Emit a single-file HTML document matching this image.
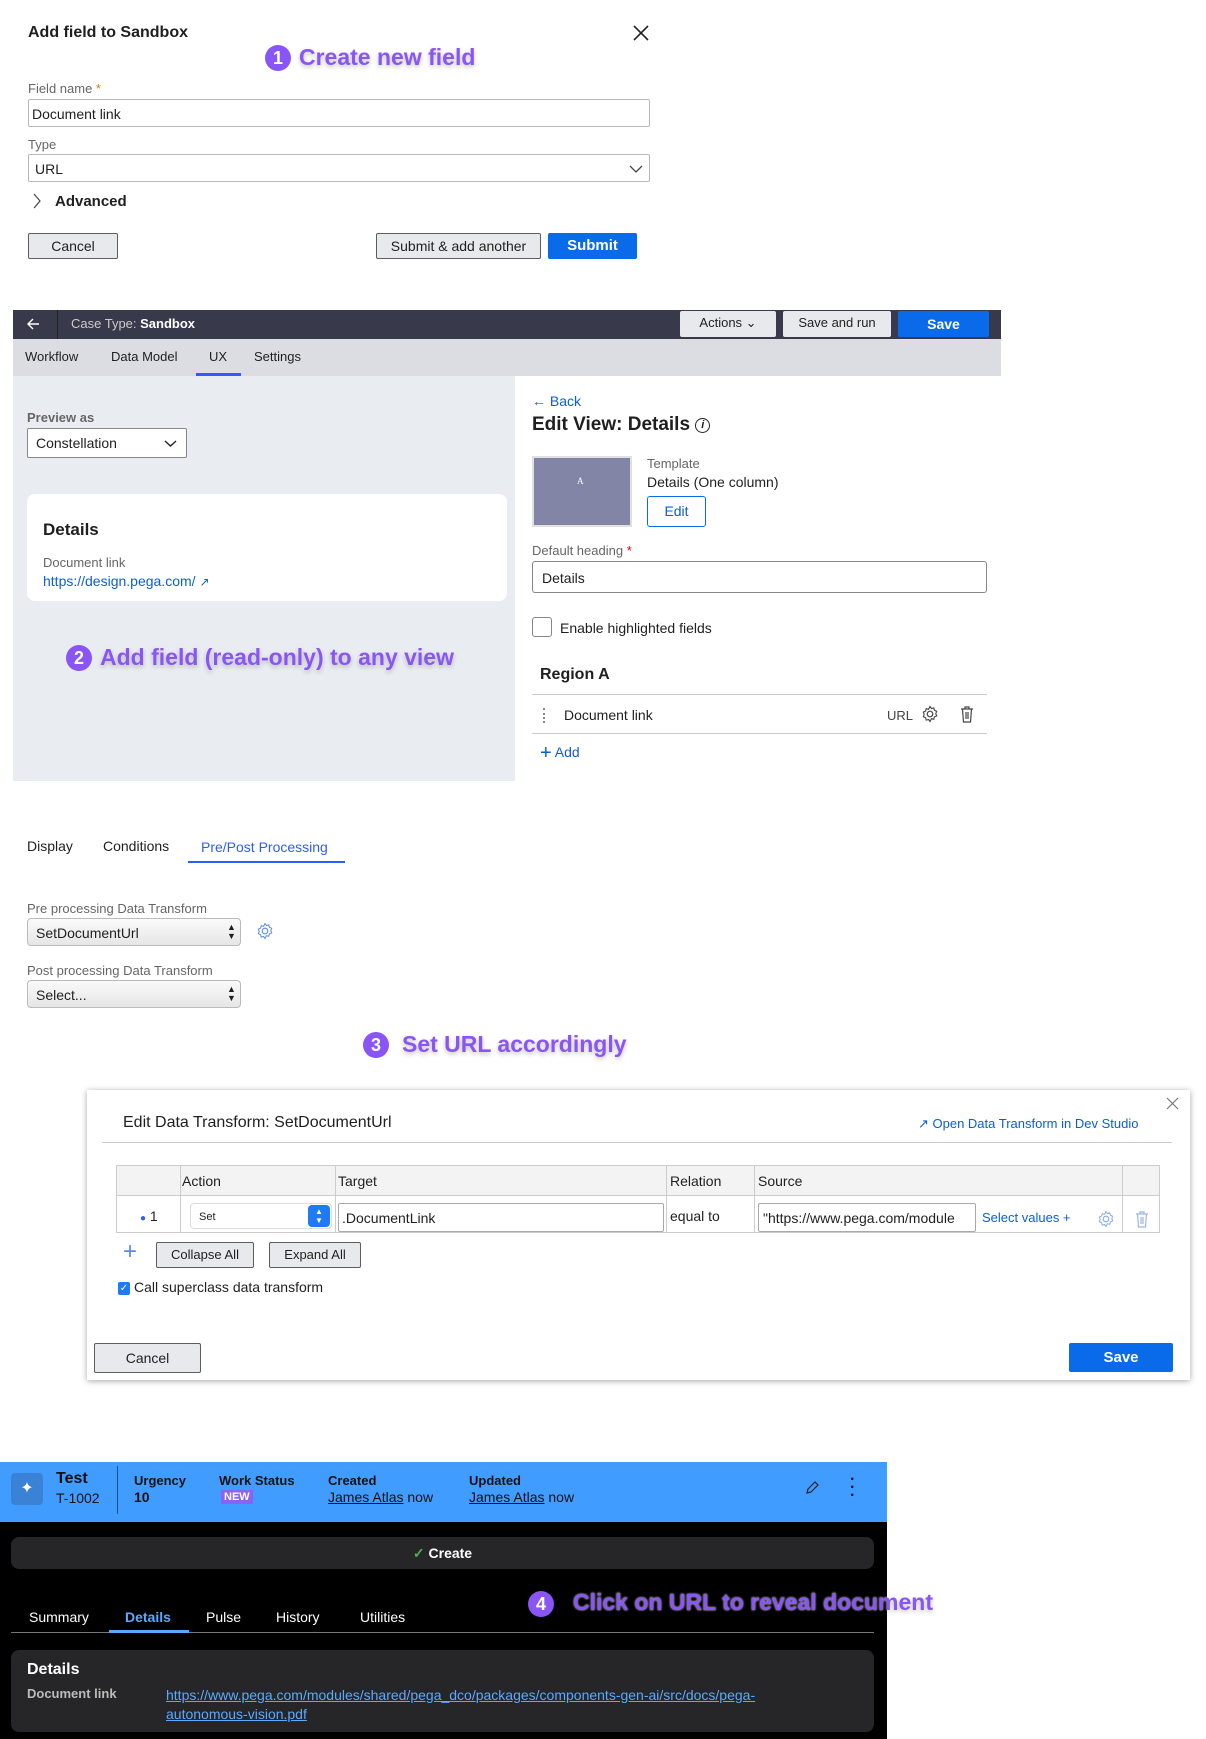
<!DOCTYPE html>
<html><head><meta charset="utf-8"><style>
*{box-sizing:border-box;margin:0;padding:0}
body{width:1206px;height:1739px;position:relative;background:#fff;font-family:"Liberation Sans",sans-serif;color:#1f1f1f;overflow:hidden;font-size:14px}
.a{position:absolute;white-space:nowrap}
.inp{position:absolute;border:1px solid #b9b9b9;border-radius:2px;background:#fff}
.btn{position:absolute;border:1px solid #5d5d5d;border-radius:2px;background:#e8e9ec;text-align:center;font-size:14px}
.blue{background:#0a6bea;color:#fff;font-weight:bold;border:none}
.circ{position:absolute;width:26px;height:26px;border-radius:50%;background:#8a55f5;color:#fff;font-weight:bold;font-size:18px;text-align:center;line-height:26px}
.ann{position:absolute;color:#8a55f5;font-weight:bold;font-size:23px;white-space:nowrap;text-shadow:0 2px 5px rgba(0,0,0,.25),0 0 2px #fff}
.lbl{color:#666;font-size:13px}
.lnk{color:#0a5fd6}
</style></head><body>

<!-- section 1 -->
<div class="a" style="left:28px;top:24px;font-size:16px;font-weight:600">Add field to Sandbox</div>
<svg class="a" style="left:632px;top:24px" width="18" height="18"><path d="M2 2L16 16M16 2L2 16" stroke="#222" stroke-width="1.6"/></svg>
<div class="circ" style="left:265px;top:45px">1</div>
<div class="ann" style="left:299px;top:44px">Create new field</div>
<div class="a lbl" style="left:28px;top:81px">Field name <span style="color:#e07b00">*</span></div>
<div class="inp" style="left:28px;top:99px;width:622px;height:28px"><span class="a" style="left:3px;top:6px">Document link</span></div>
<div class="a lbl" style="left:28px;top:137px">Type</div>
<div class="inp" style="left:28px;top:154px;width:622px;height:28px"><span class="a" style="left:6px;top:6px">URL</span>
<svg class="a" style="left:600px;top:9px" width="14" height="10"><path d="M1 2L7 8L13 2" fill="none" stroke="#444" stroke-width="1.3"/></svg></div>
<svg class="a" style="left:32px;top:193px" width="10" height="16"><path d="M2 1L8 8L2 15" fill="none" stroke="#444" stroke-width="1.2"/></svg>
<div class="a" style="left:55px;top:193px;font-size:15px;font-weight:600">Advanced</div>
<div class="btn" style="left:28px;top:233px;width:90px;height:26px;line-height:24px">Cancel</div>
<div class="btn" style="left:376px;top:233px;width:165px;height:26px;line-height:24px">Submit &amp; add another</div>
<div class="btn blue" style="left:548px;top:233px;width:89px;height:26px;line-height:26px;font-size:15px">Submit</div>

<!-- section 2 -->
<div class="a" style="left:13px;top:310px;width:988px;height:29px;background:#383a4c"></div>
<svg class="a" style="left:25px;top:316px" width="16" height="16"><path d="M14 8H3M8 3L3 8L8 13" fill="none" stroke="#fff" stroke-width="1.4"/></svg>
<div class="a" style="left:57px;top:310px;width:1px;height:29px;background:#222"></div>
<div class="a" style="left:71px;top:316px;color:#ccc;font-size:13px">Case Type: <b style="color:#fff">Sandbox</b></div>
<div class="btn" style="left:680px;top:311px;width:96px;height:26px;line-height:24px;border:none;background:#e8e9ec;font-size:13px">Actions &#8964;</div>
<div class="btn" style="left:783px;top:311px;width:108px;height:26px;line-height:24px;border:none;background:#e8e9ec;font-size:13px">Save and run</div>
<div class="btn blue" style="left:898px;top:311px;width:91px;height:26px;line-height:26px;font-size:14px">Save</div>
<div class="a" style="left:13px;top:339px;width:988px;height:37px;background:#dcdde2"></div>
<div class="a" style="left:25px;top:349px;font-size:13px">Workflow</div>
<div class="a" style="left:111px;top:349px;font-size:13px">Data Model</div>
<div class="a" style="left:209px;top:349px;font-size:13px">UX</div>
<div class="a" style="left:254px;top:349px;font-size:13px">Settings</div>
<div class="a" style="left:196px;top:373px;width:45px;height:3px;background:#2e5bff"></div>
<div class="a" style="left:13px;top:376px;width:502px;height:405px;background:#e9edf1"></div>
<div class="a lbl" style="left:27px;top:410px;font-weight:600">Preview as</div>
<div class="inp" style="left:27px;top:428px;width:160px;height:30px;border-color:#888"><span class="a" style="left:8px;top:6px">Constellation</span>
<svg class="a" style="left:136px;top:10px" width="13" height="9"><path d="M1 2L6.5 7L12 2" fill="none" stroke="#222" stroke-width="1.4"/></svg></div>
<div class="a" style="left:27px;top:494px;width:480px;height:107px;background:#fff;border-radius:8px"></div>
<div class="a" style="left:43px;top:520px;font-size:17px;font-weight:600">Details</div>
<div class="a lbl" style="left:43px;top:555px">Document link</div>
<div class="a lnk" style="left:43px;top:573px;font-size:14px">https://design.pega.com/ <span style="font-size:12px">&#8599;</span></div>
<div class="circ" style="left:66px;top:645px">2</div>
<div class="ann" style="left:100px;top:644px">Add field (read-only) to any view</div>

<div class="a lnk" style="left:532px;top:393px;font-size:14px">&#8592; Back</div>
<div class="a" style="left:532px;top:414px;font-size:19px;font-weight:600">Edit View: Details <span style="display:inline-block;width:15px;height:15px;border:1.4px solid #222;border-radius:50%;font-size:11px;text-align:center;line-height:13px;font-style:italic;vertical-align:2px">i</span></div>
<div class="a" style="left:532px;top:456px;width:100px;height:71px;border:2px solid #e0e0e0;background:#8285a6"></div>
<div class="a" style="left:577px;top:476px;color:#fff;font-size:9px;font-family:'Liberation Serif',serif">A</div>
<div class="a lbl" style="left:647px;top:456px">Template</div>
<div class="a" style="left:647px;top:474px">Details (One column)</div>
<div class="a" style="left:647px;top:496px;width:59px;height:31px;border:1px solid #0a6bea;border-radius:3px;color:#0a5fd6;text-align:center;line-height:29px">Edit</div>
<div class="a lbl" style="left:532px;top:543px">Default heading <span style="color:#d00">*</span></div>
<div class="inp" style="left:532px;top:561px;width:455px;height:32px;border-color:#888;border-radius:3px"><span class="a" style="left:9px;top:8px">Details</span></div>
<div class="a" style="left:532px;top:617px;width:20px;height:20px;border:1px solid #888;border-radius:3px"></div>
<div class="a" style="left:560px;top:620px">Enable highlighted fields</div>
<div class="a" style="left:540px;top:666px;font-size:16px;font-weight:600">Region A</div>
<div class="a" style="left:532px;top:694px;width:455px;height:1px;background:#ccc"></div>
<div class="a" style="left:543px;top:708px;width:2px;height:15px;border-left:2px dotted #888"></div>
<div class="a" style="left:564px;top:707px">Document link</div>
<div class="a" style="left:887px;top:708px;font-size:13px;color:#444">URL</div>
<svg class="a" style="left:921px;top:705px" width="18" height="18" viewBox="0 0 18 18"><circle cx="9" cy="9" r="2.8" fill="none" stroke="#444" stroke-width="1.2"/><path d="M9 1.5l1.4 2 2.4-.6.6 2.4 2.3 1-.9 2.3.9 2.3-2.3 1-.6 2.4-2.4-.6L9 16.5l-1.4-2-2.4.6-.6-2.4-2.3-1 .9-2.3L2.3 7.1l2.3-1 .6-2.4 2.4.6z" fill="none" stroke="#444" stroke-width="1.1"/></svg>
<svg class="a" style="left:960px;top:705px" width="14" height="18"><path d="M1 4H13M5 4V2H9V4M2.5 4L3.5 17H10.5L11.5 4M6 7V14M8 7V14" fill="none" stroke="#444" stroke-width="1.2"/></svg>
<div class="a" style="left:532px;top:733px;width:455px;height:1px;background:#ccc"></div>
<div class="a lnk" style="left:540px;top:742px;font-size:14px"><span style="font-size:20px;vertical-align:-2px">+</span> Add</div>

<!-- section 3 -->
<div class="a" style="left:27px;top:838px">Display</div>
<div class="a" style="left:103px;top:838px">Conditions</div>
<div class="a" style="left:201px;top:839px;color:#2e5bff">Pre/Post Processing</div>
<div class="a" style="left:188px;top:861px;width:157px;height:2px;background:#2e5bff"></div>
<div class="a lbl" style="left:27px;top:901px">Pre processing Data Transform</div>
<div class="a" style="left:27px;top:918px;width:214px;height:28px;border:1px solid #bbb;border-radius:4px;background:linear-gradient(#fafafa,#e6e6e6)"><span class="a" style="left:8px;top:6px">SetDocumentUrl</span><span class="a" style="left:199px;top:4px;font-size:9px;line-height:9px">▲<br>▼</span></div>
<svg class="a" style="left:256px;top:922px" width="18" height="18" viewBox="0 0 18 18"><circle cx="9" cy="9" r="2.8" fill="none" stroke="#5b8bea" stroke-width="1.1"/><path d="M9 1.5l1.4 2 2.4-.6.6 2.4 2.3 1-.9 2.3.9 2.3-2.3 1-.6 2.4-2.4-.6L9 16.5l-1.4-2-2.4.6-.6-2.4-2.3-1 .9-2.3L2.3 7.1l2.3-1 .6-2.4 2.4.6z" fill="none" stroke="#5b8bea" stroke-width="1"/></svg>
<div class="a lbl" style="left:27px;top:963px">Post processing Data Transform</div>
<div class="a" style="left:27px;top:980px;width:214px;height:28px;border:1px solid #bbb;border-radius:4px;background:linear-gradient(#fafafa,#e6e6e6)"><span class="a" style="left:8px;top:6px">Select...</span><span class="a" style="left:199px;top:4px;font-size:9px;line-height:9px">▲<br>▼</span></div>
<div class="circ" style="left:363px;top:1032px">3</div>
<div class="ann" style="left:402px;top:1031px">Set URL accordingly</div>

<div class="a" style="left:87px;top:1090px;width:1103px;height:290px;background:#fff;box-shadow:0 1px 6px rgba(0,0,0,.35)"></div>
<svg class="a" style="left:1166px;top:1097px" width="13" height="13"><path d="M1 1L12 12M12 1L1 12" stroke="#777" stroke-width="1.2"/></svg>
<div class="a" style="left:123px;top:1114px;font-size:16px">Edit Data Transform: SetDocumentUrl</div>
<div class="a lnk" style="left:918px;top:1116px;font-size:13px">&#8599; Open Data Transform in Dev Studio</div>
<div class="a" style="left:102px;top:1142px;width:1070px;height:1px;background:#ccc"></div>
<div class="a" style="left:116px;top:1165px;width:1044px;height:68px;border:1px solid #ccc;background:#fff"></div>
<div class="a" style="left:117px;top:1166px;width:1042px;height:30px;background:#f3f3f3;border-bottom:1px solid #ccc"></div>
<div class="a" style="left:180px;top:1166px;width:1px;height:66px;background:#ccc"></div>
<div class="a" style="left:335px;top:1166px;width:1px;height:66px;background:#ccc"></div>
<div class="a" style="left:666px;top:1166px;width:1px;height:66px;background:#ccc"></div>
<div class="a" style="left:754px;top:1166px;width:1px;height:66px;background:#ccc"></div>
<div class="a" style="left:1122px;top:1166px;width:1px;height:66px;background:#ccc"></div>
<div class="a" style="left:182px;top:1173px">Action</div>
<div class="a" style="left:338px;top:1173px">Target</div>
<div class="a" style="left:670px;top:1173px">Relation</div>
<div class="a" style="left:758px;top:1173px">Source</div>
<div class="a" style="left:140px;top:1208px"><span style="color:#2e5bff;font-size:10px">●</span> 1</div>
<div class="a" style="left:190px;top:1203px;width:142px;height:26px;border:1px solid #ddd;border-radius:4px;font-size:11px;padding:7px 8px">Set</div>
<div class="a" style="left:308px;top:1205px;width:22px;height:22px;background:#1e7bf5;border-radius:4px;color:#fff;font-size:8px;text-align:center;line-height:9px;padding-top:2px">▲<br>▼</div>
<div class="inp" style="left:338px;top:1203px;width:326px;height:29px;border-color:#aaa"><span class="a" style="left:3px;top:6px">.DocumentLink</span></div>
<div class="a" style="left:670px;top:1208px">equal to</div>
<div class="inp" style="left:758px;top:1203px;width:218px;height:29px;border-color:#aaa;overflow:hidden"><span class="a" style="left:4px;top:6px">"https://www.pega.com/module</span></div>
<div class="a lnk" style="left:982px;top:1210px;font-size:13px">Select values +</div>
<svg class="a" style="left:1097px;top:1210px" width="18" height="18" viewBox="0 0 18 18"><circle cx="9" cy="9" r="2.8" fill="none" stroke="#8aa8e8" stroke-width="1.1"/><path d="M9 1.5l1.4 2 2.4-.6.6 2.4 2.3 1-.9 2.3.9 2.3-2.3 1-.6 2.4-2.4-.6L9 16.5l-1.4-2-2.4.6-.6-2.4-2.3-1 .9-2.3L2.3 7.1l2.3-1 .6-2.4 2.4.6z" fill="none" stroke="#8aa8e8" stroke-width="1"/></svg>
<svg class="a" style="left:1135px;top:1210px" width="14" height="18"><path d="M1 4H13M5 4V2H9V4M2.5 4L3.5 17H10.5L11.5 4M6 7V14M8 7V14" fill="none" stroke="#9bb4ea" stroke-width="1.2"/></svg>
<div class="a" style="left:123px;top:1238px;color:#5b8bea;font-size:24px;font-weight:300">+</div>
<div class="btn" style="left:156px;top:1242px;width:98px;height:26px;line-height:24px;font-size:13px">Collapse All</div>
<div class="btn" style="left:269px;top:1242px;width:92px;height:26px;line-height:24px;font-size:13px">Expand All</div>
<div class="a" style="left:118px;top:1282px;width:12px;height:13px;background:#1e7bf5;border-radius:2px;color:#fff;font-size:10px;text-align:center;line-height:13px">✓</div>
<div class="a" style="left:134px;top:1279px">Call superclass data transform</div>
<div class="btn" style="left:94px;top:1343px;width:107px;height:30px;line-height:28px;background:#e8e9ec">Cancel</div>
<div class="btn blue" style="left:1069px;top:1343px;width:104px;height:29px;line-height:29px;font-size:15px">Save</div>

<!-- section 4 -->
<div class="a" style="left:0;top:1462px;width:887px;height:60px;background:#409cff"></div>
<div class="a" style="left:11px;top:1473px;width:32px;height:32px;background:#3a82d6;border-radius:4px;color:#fff;text-align:center;line-height:32px;font-size:16px">✦</div>
<div class="a" style="left:56px;top:1470px;font-size:16px;font-weight:bold;color:#111">Test</div>
<div class="a" style="left:56px;top:1490px;font-size:14px;color:#111">T-1002</div>
<div class="a" style="left:117px;top:1466px;width:1px;height:48px;background:#1c4e88"></div>
<div class="a" style="left:134px;top:1473px;font-size:13px;font-weight:600;color:#111">Urgency</div>
<div class="a" style="left:134px;top:1489px;font-size:14px;font-weight:bold;color:#111">10</div>
<div class="a" style="left:219px;top:1473px;font-size:13px;font-weight:600;color:#111">Work Status</div>
<div class="a" style="left:221px;top:1490px;font-size:11px;font-weight:bold;color:#fff;background:#8a63f0;padding:1px 3px">NEW</div>
<div class="a" style="left:328px;top:1473px;font-size:13px;font-weight:600;color:#111">Created</div>
<div class="a" style="left:328px;top:1489px;font-size:14px;color:#111"><u>James Atlas</u> now</div>
<div class="a" style="left:469px;top:1473px;font-size:13px;font-weight:600;color:#111">Updated</div>
<div class="a" style="left:469px;top:1489px;font-size:14px;color:#111"><u>James Atlas</u> now</div>
<svg class="a" style="left:804px;top:1480px" width="16" height="16"><path d="M3 13L4 9L11 2L14 5L7 12Z" fill="none" stroke="#222" stroke-width="1.2"/></svg>
<div class="a" style="left:850px;top:1476px;font-size:16px;font-weight:bold;line-height:8px;color:#111">·<br>·<br>·</div>
<div class="a" style="left:0;top:1522px;width:887px;height:217px;background:#000"></div>
<div class="a" style="left:11px;top:1537px;width:863px;height:32px;background:#262628;border-radius:8px;color:#fff;text-align:center;line-height:32px;font-weight:bold;font-size:14px"><span style="color:#4caf50">✓</span> Create</div>
<div class="a" style="left:29px;top:1609px;color:#fff">Summary</div>
<div class="a" style="left:125px;top:1609px;color:#5ba8ff;font-weight:bold">Details</div>
<div class="a" style="left:206px;top:1609px;color:#fff">Pulse</div>
<div class="a" style="left:276px;top:1609px;color:#fff">History</div>
<div class="a" style="left:360px;top:1609px;color:#fff">Utilities</div>
<div class="a" style="left:11px;top:1632px;width:863px;height:1px;background:#777"></div>
<div class="a" style="left:109px;top:1630px;width:80px;height:3px;background:#5ba8ff"></div>
<div class="a" style="left:11px;top:1650px;width:863px;height:82px;background:#262628;border-radius:8px"></div>
<div class="a" style="left:27px;top:1661px;color:#fff;font-size:16px;font-weight:bold">Details</div>
<div class="a" style="left:27px;top:1686px;color:#bbb;font-size:13px;font-weight:600">Document link</div>
<div class="a" style="left:166px;top:1686px;color:#5ba8ff;font-size:14px;line-height:19px;text-decoration:underline">https://www.pega.com/modules/shared/pega_dco/packages/components-gen-ai/src/docs/pega-<br>autonomous-vision.pdf</div>
<div class="circ" style="left:528px;top:1591px">4</div>
<div class="ann" style="left:573px;top:1589px">Click on URL to reveal document</div>
</body></html>
